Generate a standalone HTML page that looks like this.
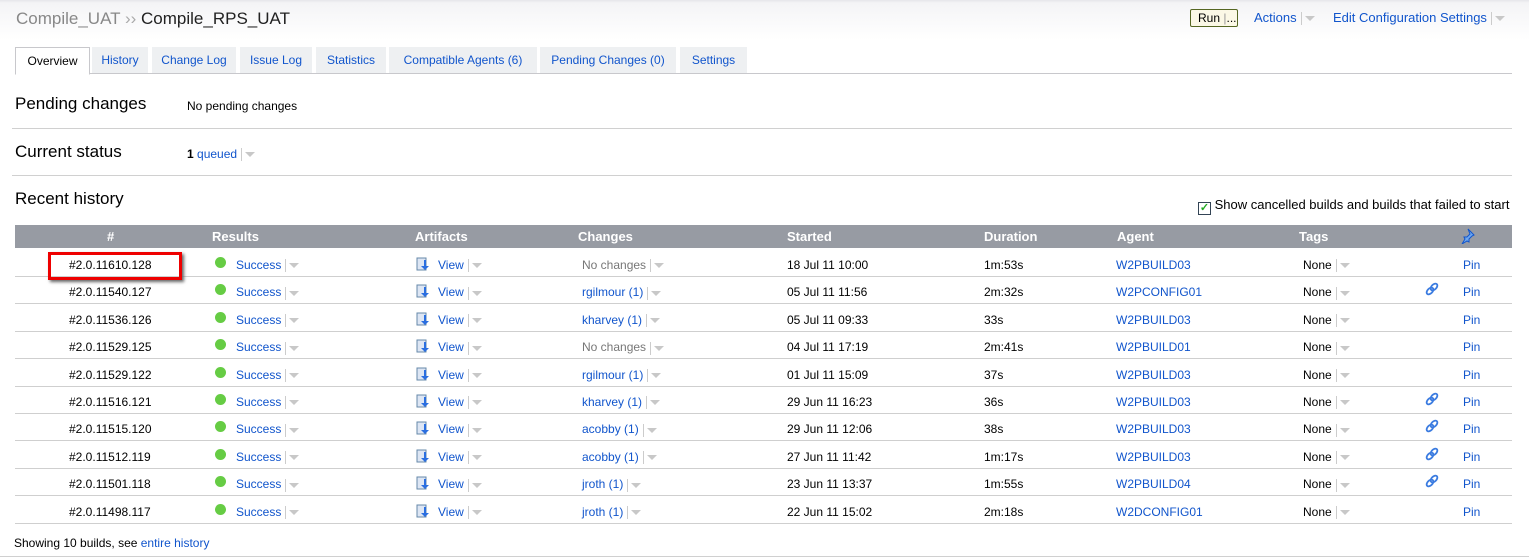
<!DOCTYPE html>
<html><head><meta charset="utf-8"><style>
*{margin:0;padding:0;box-sizing:border-box}
body{width:1529px;height:560px;background:#fff;font-family:"Liberation Sans",sans-serif;font-size:12px;color:#000;position:relative;overflow:hidden}
a{color:#1155cc;text-decoration:none}
.abs{position:absolute;white-space:nowrap}
.top{position:absolute;left:0;top:0;width:1529px;height:40px;background:linear-gradient(#e6e6ea 0,#f4f4f6 3px,#fff 40px)}
.dd{display:inline-block;border-left:1px solid #ccc;height:13px;vertical-align:middle;margin-left:4px;padding-left:3px;position:relative;width:14px}
.dd:after{content:"";position:absolute;left:3px;top:4px;border:5px solid transparent;border-top:5px solid #c8c8c8;border-bottom:0}
.tabs{position:absolute;left:15px;top:47px;height:27px;width:1497px;border-bottom:1px solid #c8c8cc}
.tab{position:absolute;top:0;height:26px;background:#eef0f2;color:#1155cc;font-size:12px;line-height:27px;text-align:center}
.tab.on{background:#fff;color:#000;border:1px solid #c8c8cc;border-bottom:1px solid #fff;height:28px}
h2{position:absolute;font-size:17px;font-weight:normal;color:#000}
.hr{position:absolute;left:12px;width:1500px;height:1px;background:#d0d0d0}
.th{position:absolute;left:15px;top:225px;width:1497px;height:23px;background:#979ba3}
.th span{position:absolute;top:4px;color:#fff;font-weight:bold;font-size:13px}
.row{position:absolute;left:15px;width:1497px;height:27px;border-bottom:1px solid #cfcfcf}
.row span{position:absolute;top:8px;white-space:nowrap;font-size:12px}
.dot{display:inline-block;width:11px;height:11px;border-radius:50%;background:#66cc44}
.gr{color:#777}
</style></head><body>
<div class="top"></div>
<div class="abs" style="left:16px;top:9px;font-size:17px;color:#888">Compile_UAT <span style="color:#aaa">&#8250;&#8250;</span> <span style="color:#222">Compile_RPS_UAT</span></div>
<div class="abs" style="left:1190px;top:9px;width:48px;height:18px;border:1px solid #556622;border-radius:2px;background:#fbf8e6;font-size:12px;line-height:16px;padding-left:7px">Run <span style="color:#999">|</span>...</div>
<div class="abs" style="left:1254px;top:10px;font-size:13px"><a>Actions</a><span class="dd"></span></div>
<div class="abs" style="left:1333px;top:10px;font-size:13px"><a>Edit Configuration Settings</a><span class="dd"></span></div>
<div class="tabs">
<div class="tab on" style="left:0;width:75px">Overview</div>
<div class="tab" style="left:77px;width:56px">History</div>
<div class="tab" style="left:137px;width:84px">Change Log</div>
<div class="tab" style="left:225px;width:72px">Issue Log</div>
<div class="tab" style="left:301px;width:70px">Statistics</div>
<div class="tab" style="left:374px;width:148px">Compatible Agents (6)</div>
<div class="tab" style="left:525px;width:136px">Pending Changes (0)</div>
<div class="tab" style="left:665px;width:67px">Settings</div>
</div>
<h2 style="left:15px;top:94px">Pending changes</h2>
<div class="abs" style="left:187px;top:99px">No pending changes</div>
<div class="hr" style="top:128px"></div>
<h2 style="left:15px;top:142px">Current status</h2>
<div class="abs" style="left:187px;top:147px"><b>1</b> <a>queued</a><span class="dd"></span></div>
<div class="hr" style="top:175px"></div>
<h2 style="left:15px;top:189px">Recent history</h2>
<div class="abs" style="left:1198px;top:197px;font-size:13px"><span style="display:inline-block;width:13px;height:13px;border:1px solid #345;vertical-align:-2px;text-align:center;line-height:11px;color:#2a2;font-size:11px;font-weight:bold">&#10003;</span> Show cancelled builds and builds that failed to start</div>
<div class="th">
<span style="left:92px">#</span><span style="left:197px">Results</span><span style="left:400px">Artifacts</span><span style="left:563px">Changes</span><span style="left:772px">Started</span><span style="left:969px">Duration</span><span style="left:1102px">Agent</span><span style="left:1284px">Tags</span>
<svg style="position:absolute;left:1444px;top:3px" width="16" height="16" viewBox="0 0 16 16"><path d="M9 1l6 6-2 1-3 3 0 3-2-1-5 3 3-5-1-2 3 0 3-3z" fill="#6fa8f0" stroke="#1155cc" stroke-width="1"/></svg>
</div>
<div id="rows"></div>
<div class="abs" style="left:48px;top:252px;width:134px;height:28px;border:3px solid #e00;box-shadow:2px 2px 3px #666"></div>
<div class="abs" style="left:14px;top:536px">Showing 10 builds, see <a>entire history</a></div>
<div class="hr" style="top:556px;left:0;width:1529px"></div>
<script>
var d=[["#2.0.11610.128","No changes","18 Jul 11 10:00","1m:53s","W2PBUILD03",0],
["#2.0.11540.127","rgilmour (1)","05 Jul 11 11:56","2m:32s","W2PCONFIG01",1],
["#2.0.11536.126","kharvey (1)","05 Jul 11 09:33","33s","W2PBUILD03",0],
["#2.0.11529.125","No changes","04 Jul 11 17:19","2m:41s","W2PBUILD01",0],
["#2.0.11529.122","rgilmour (1)","01 Jul 11 15:09","37s","W2PBUILD03",0],
["#2.0.11516.121","kharvey (1)","29 Jun 11 16:23","36s","W2PBUILD03",1],
["#2.0.11515.120","acobby (1)","29 Jun 11 12:06","38s","W2PBUILD03",1],
["#2.0.11512.119","acobby (1)","27 Jun 11 11:42","1m:17s","W2PBUILD03",1],
["#2.0.11501.118","jroth (1)","23 Jun 11 13:37","1m:55s","W2PBUILD04",1],
["#2.0.11498.117","jroth (1)","22 Jun 11 15:02","2m:18s","W2DCONFIG01",0]];
var h="",y=250;
var art='<svg width="14" height="14" viewBox="0 0 14 14" style="vertical-align:-3px"><rect x="1" y="1" width="9" height="12" fill="#dde6f4" stroke="#6688aa"/><path d="M8 3v6h-3l4 4 4-4h-3V3z" fill="#2a6ee0"/></svg>';
var lk='<svg width="14" height="14" viewBox="0 0 14 14"><ellipse cx="5" cy="9" rx="2.5" ry="4" transform="rotate(45 5 9)" fill="none" stroke="#3a7be0" stroke-width="1.8"/><ellipse cx="9" cy="5" rx="2.5" ry="4" transform="rotate(45 9 5)" fill="none" stroke="#3a7be0" stroke-width="1.8"/></svg>';
for(var i=0;i<d.length;i++){var r=d[i];var ch=r[1]=="No changes"?'<span class="gr" style="position:static">No changes</span>':'<a>'+r[1]+'</a>';
h+='<div class="row" style="top:'+(y+i*27.4)+'px"><span style="left:54px">'+r[0]+'</span><span style="left:200px;top:7px"><i class="dot"></i></span><span style="left:221px"><a>Success</a><i class="dd"></i></span><span style="left:401px;top:7px">'+art+'</span><span style="left:423px"><a>View</a><i class="dd"></i></span><span style="left:567px">'+ch+'<i class="dd"></i></span><span style="left:772px">'+r[2]+'</span><span style="left:969px">'+r[3]+'</span><span style="left:1101px"><a>'+r[4]+'</a></span><span style="left:1288px">None<i class="dd"></i></span>'+(r[5]?'<span style="left:1410px;top:5px">'+lk+'</span>':'')+'<span style="left:1448px"><a>Pin</a></span></div>';}
document.getElementById("rows").innerHTML=h;
</script>
</body></html>
